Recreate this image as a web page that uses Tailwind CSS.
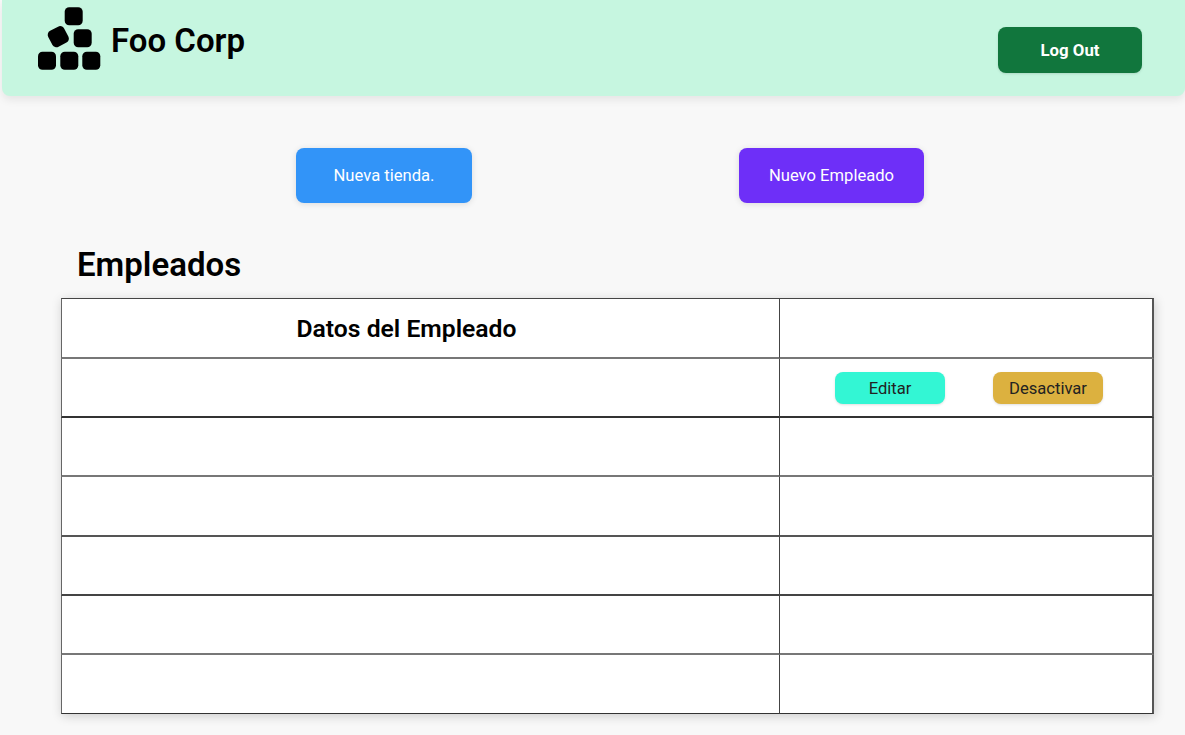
<!DOCTYPE html>
<html lang="es">
<head>
<meta charset="utf-8">
<title>Foo Corp</title>
<script src="https://cdn.jsdelivr.net/npm/@tailwindcss/browser@4"></script>
</head>
<body class="m-0 h-[735px] overflow-hidden bg-[#f8f8f8] font-['Roboto',sans-serif] text-black">
  <header class="ml-[2px] flex h-[96px] items-start justify-between rounded-b-lg bg-[#c6f6e0] shadow-[0_4px_8px_rgba(0,0,0,0.08)]">
    <div class="ml-[36px] mt-[7px] flex items-start gap-[10px]">
      <svg class="h-[63px] w-[63px]" viewBox="0 0 63 63" fill="#000" aria-hidden="true">
        <rect x="26.7" y="0.3" width="18" height="18" rx="4.5"/>
        <rect x="35.7" y="22.3" width="18" height="18" rx="4.5"/>
        <rect x="11.3" y="20.7" width="18" height="18" rx="4.5" transform="rotate(-28 20.3 29.7)"/>
        <rect x="0" y="44.7" width="18" height="18" rx="4.5"/>
        <rect x="22.3" y="44.7" width="18" height="18" rx="4.5"/>
        <rect x="44.3" y="44.7" width="18" height="18" rx="4.5"/>
      </svg>
      <span class="mt-[11px] text-[33px] leading-[45px] font-semibold">Foo Corp</span>
    </div>
    <button class="mr-[43px] mt-[27px] h-[46px] w-[144px] rounded-lg bg-[#11763d] pt-[1px] text-[16.8px] font-bold text-white shadow-sm">Log Out</button>
  </header>

  <main>
    <div class="mt-[52px] flex">
      <button class="ml-[296px] h-[55px] w-[176px] rounded-lg bg-[#3294f8] pt-[1px] text-[16.6px] font-[450] text-white shadow-[0_1px_6px_rgba(0,0,0,0.12)]">Nueva tienda.</button>
      <button class="ml-[267px] h-[55px] w-[185px] rounded-lg bg-[#6e2ff8] pt-[1px] text-[16.6px] font-[450] text-white shadow-[0_1px_6px_rgba(0,0,0,0.12)]">Nuevo Empleado</button>
    </div>

    <h1 class="ml-[77px] mt-[38px] pt-[1px] text-[33px] leading-[45px] font-semibold">Empleados</h1>

    <table class="ml-[61px] mt-[11px] w-[1093px] table-fixed border-separate border-spacing-0 bg-white shadow-[1px_2px_10px_rgba(0,0,0,0.18)]">
      <colgroup>
        <col class="w-[719px]">
        <col>
      </colgroup>
      <thead>
        <tr>
          <th class="h-[61px] border-t border-b-2 border-l border-r border-t-[#444] border-b-[#777] border-l-[#666] border-r-[#444] p-0 pr-[28px] pt-[1px] text-center text-[24.7px] font-semibold">Datos del Empleado</th>
          <th class="h-[61px] border-t border-b-2 border-r-2 border-t-[#444] border-b-[#777] border-r-[#555] p-0"></th>
        </tr>
      </thead>
      <tbody>
        <tr>
          <td class="h-[59px] border-b-2 border-l border-r border-b-[#333] border-l-[#666] border-r-[#444] p-0"></td>
          <td class="h-[59px] border-b-2 border-r-2 border-b-[#333] border-r-[#555] p-0">
            <div class="flex justify-center gap-[48px] pl-[6px] pt-[1px]">
              <button class="h-[32px] w-[110px] rounded-lg bg-[#33f6d4] pt-[2px] text-[16.6px] text-[#222] shadow-sm">Editar</button>
              <button class="h-[32px] w-[110px] rounded-lg bg-[#dcb13f] pt-[2px] text-[16.6px] text-[#222] shadow-sm">Desactivar</button>
            </div>
          </td>
        </tr>
        <tr>
          <td class="h-[59px] border-b-2 border-l border-r border-b-[#777] border-l-[#666] border-r-[#444] p-0"></td>
          <td class="h-[59px] border-b-2 border-r-2 border-b-[#777] border-r-[#555] p-0"></td>
        </tr>
        <tr>
          <td class="h-[60px] border-b-2 border-l border-r border-b-[#555] border-l-[#666] border-r-[#444] p-0"></td>
          <td class="h-[60px] border-b-2 border-r-2 border-b-[#555] border-r-[#555] p-0"></td>
        </tr>
        <tr>
          <td class="h-[59px] border-b-2 border-l border-r border-b-[#444] border-l-[#666] border-r-[#444] p-0"></td>
          <td class="h-[59px] border-b-2 border-r-2 border-b-[#444] border-r-[#555] p-0"></td>
        </tr>
        <tr>
          <td class="h-[59px] border-b-2 border-l border-r border-b-[#777] border-l-[#666] border-r-[#444] p-0"></td>
          <td class="h-[59px] border-b-2 border-r-2 border-b-[#777] border-r-[#555] p-0"></td>
        </tr>
        <tr>
          <td class="h-[59px] border-b border-l border-r border-b-[#333] border-l-[#666] border-r-[#444] p-0"></td>
          <td class="h-[59px] border-b border-r-2 border-b-[#333] border-r-[#555] p-0"></td>
        </tr>
      </tbody>
    </table>
  </main>
</body>
</html>
